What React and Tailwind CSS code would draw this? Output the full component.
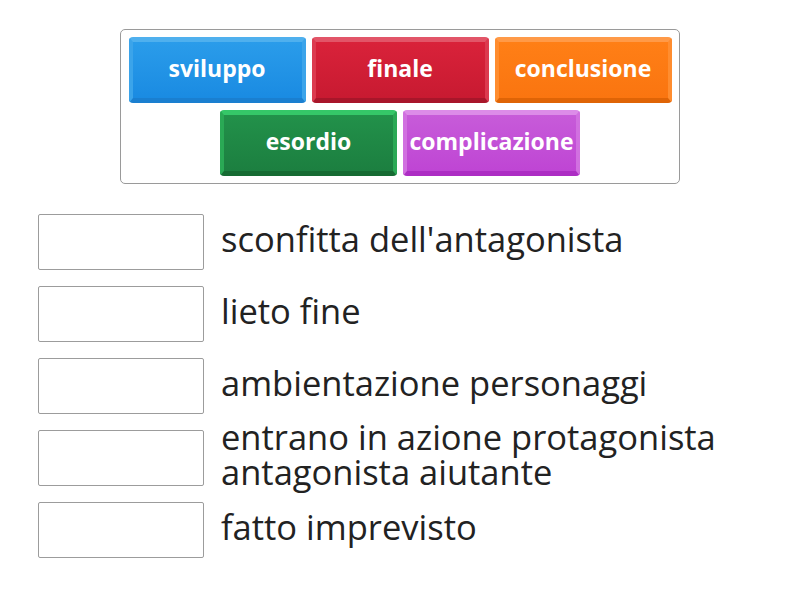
import React from 'react';

const tiles = [
  { label: 'sviluppo', cls: 'border-t-[#4fb0ee] border-x-[#3ba4ea] border-b-[#1a7fd0] from-[#2a9cea] to-[#1a8be2]' },
  { label: 'finale', cls: 'border-t-[#e25568] border-x-[#dc3a4f] border-b-[#a8162a] from-[#d9223a] to-[#c81a31]' },
  { label: 'conclusione', cls: 'border-t-[#ff9a48] border-x-[#ff8d2f] border-b-[#df6406] from-[#ff7f16] to-[#fa7510]' },
  { label: 'esordio', cls: 'border-t-[#35c768] border-x-[#2aa955] border-b-[#166b33] from-[#22914a] to-[#1c7f40]' },
  { label: 'complicazione', cls: 'border-t-[#dc8ce8] border-x-[#d170e0] border-b-[#ad2dc4] from-[#c75bd9] to-[#bf45d4]' },
];

const rows = [
  ['sconfitta dell\'antagonista'],
  ['lieto fine'],
  ['ambientazione personaggi'],
  ['entrano in azione protagonista', 'antagonista aiutante'],
  ['fatto imprevisto'],
];

const Tile = ({ label, cls }) => (
  <div
    className={`w-[177px] h-[66px] rounded-[4px] border-t-[5px] border-x-[4px] border-b-[5px] bg-gradient-to-b ${cls} flex items-center justify-center text-white font-bold text-[23px] leading-none whitespace-nowrap`}
  >
    <span className="-mt-[3px]">{label}</span>
  </div>
);

export default function App() {
  return (
    <div className="w-[800px] h-[600px] bg-white relative" style={{ fontFamily: '"Open Sans", "Liberation Sans", sans-serif' }}>
      <div className="pt-[29px] flex justify-center">
        <div className="w-[560px] border border-[#9a9a9a] rounded-[5px] p-[7px] flex flex-col items-center gap-[7px]">
          <div className="flex gap-[6px]">
            {tiles.slice(0, 3).map(t => <Tile key={t.label} {...t} />)}
          </div>
          <div className="flex gap-[6px]">
            {tiles.slice(3).map(t => <Tile key={t.label} {...t} />)}
          </div>
        </div>
      </div>

      <div className="mt-[30px] pl-[38px] flex flex-col gap-[16px]">
        {rows.map((lines, i) => (
          <div key={i} className="h-[56px] flex items-center gap-[17px]">
            <div className="w-[166px] h-[56px] border border-[#9c9c9c] rounded-[2px] bg-white shrink-0" />
            <div className="text-[34.5px] leading-[35px] text-[#222] -translate-y-[4px] whitespace-nowrap">
              {lines.map((l, j) => <div key={j}>{l}</div>)}
            </div>
          </div>
        ))}
      </div>
    </div>
  );
}
